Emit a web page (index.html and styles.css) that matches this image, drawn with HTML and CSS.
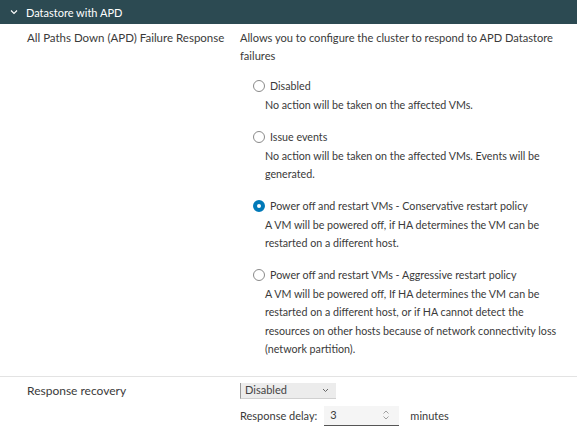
FILE: index.html
```html
<!DOCTYPE html>
<html>
<head>
<meta charset="utf-8">
<link rel="stylesheet" href="styles.css">
</head>
<body>
<div class="header">
  <svg class="chev" width="8" height="6" viewBox="0 0 8 6"><path d="M1 1.5 L4 4.5 L7 1.5" fill="none" stroke="#fff" stroke-width="1.1"/></svg>
  <span class="title">Datastore with APD</span>
</div>
<div class="row first">
  <div class="label">All Paths Down (APD) Failure Response</div>
  <div class="content">
    <div class="intro">Allows you to configure the cluster to respond to APD Datastore failures</div>
    <div class="option">
      <div class="opt-line"><span class="radio"></span><span>Disabled</span></div>
      <div class="desc">No action will be taken on the affected VMs.</div>
    </div>
    <div class="option">
      <div class="opt-line"><span class="radio"></span><span>Issue events</span></div>
      <div class="desc">No action will be taken on the affected VMs. Events will be generated.</div>
    </div>
    <div class="option">
      <div class="opt-line"><span class="radio checked"></span><span>Power off and restart VMs - Conservative restart policy</span></div>
      <div class="desc">A VM will be powered off, if HA determines the VM can be restarted on a different host.</div>
    </div>
    <div class="option last">
      <div class="opt-line"><span class="radio"></span><span>Power off and restart VMs - Aggressive restart policy</span></div>
      <div class="desc">A VM will be powered off, If HA determines the VM can be restarted on a different host, or if HA cannot detect the resources on other hosts because of network connectivity loss (network partition).</div>
    </div>
  </div>
</div>
<div class="row second">
  <div class="label">Response recovery</div>
  <div class="content">
    <div class="select"><span>Disabled</span><svg width="7" height="5" viewBox="0 0 7 5"><path d="M1 1 L3.5 3.5 L6 1" fill="none" stroke="#666" stroke-width="1"/></svg></div>
    <div class="delay">
      <span class="delay-label">Response delay:</span>
      <div class="num"><span>3</span><svg width="8" height="12" viewBox="0 0 8 12"><path d="M1.5 4.5 L4 2 L6.5 4.5 M1.5 7.5 L4 10 L6.5 7.5" fill="none" stroke="#a0a0a0" stroke-width="1"/></svg></div>
      <span class="unit">minutes</span>
    </div>
  </div>
</div>
</body>
</html>
```
FILE: styles.css
```css
html, body {
  margin: 0;
  padding: 0;
  background: #fff;
}
body {
  font-family: Lato, "Noto Sans", sans-serif;
  font-size: 10.7px;
  color: #3a3a3a;
  width: 577px;
  height: 434px;
  overflow: hidden;
}
.header {
  height: 24px;
  background: #2c4a52;
  color: #fff;
  display: flex;
  align-items: center;
  padding-left: 10px;
  font-size: 11px;
}
.chev {
  margin-right: 8px;
}
.row {
  display: flex;
  line-height: 18px;
}
.label {
  width: 213px;
  padding-left: 27px;
  flex: none;
  font-size: 11.5px;
}
.content {
  flex: 1;
  padding-right: 10px;
}
.row.first {
  padding-top: 5px;
  padding-bottom: 17px;
  border-bottom: 1px solid #e3e3e3;
}
.intro {
  margin-bottom: 12px;
  font-size: 11.1px;
}
.option {
  padding-left: 13px;
  margin-bottom: 14px;
}
.option.last {
  margin-bottom: 0;
}
.opt-line {
  display: flex;
  align-items: center;
  margin-bottom: 1px;
}
.option.last .desc {
  line-height: 18.4px;
}
.radio {
  width: 10px;
  height: 10px;
  border: 1px solid #8a8a8a;
  border-radius: 50%;
  box-sizing: content-box;
  margin-right: 5px;
  flex: none;
}
.radio.checked {
  width: 4px;
  height: 4px;
  border: 4px solid #0079b8;
  background: #fff;
}
.desc {
  padding-left: 12px;
}
.row.second {
  padding-top: 6px;
}
.row.second .label {
  line-height: 16px;
  font-size: 12px;
}
.select {
  width: 96px;
  height: 16px;
  box-sizing: border-box;
  background: #ececec;
  border-left: 1px solid #9a9a9a;
  border-bottom: 1px solid #d0d0d0;
  display: flex;
  align-items: center;
  justify-content: space-between;
  padding: 0 7px 0 4px;
  line-height: 16px;
  color: #444;
  font-size: 11px;
}
.delay {
  display: flex;
  align-items: center;
  margin-top: 7px;
  font-size: 11px;
}
.delay-label {
  margin-right: 7px;
}
.num {
  width: 75px;
  height: 20px;
  box-sizing: border-box;
  background: #f5f5f5;
  border-bottom: 1px solid #555;
  display: flex;
  align-items: center;
  justify-content: space-between;
  padding: 0 9px 0 6px;
}
.unit {
  margin-left: 11px;
}
```
